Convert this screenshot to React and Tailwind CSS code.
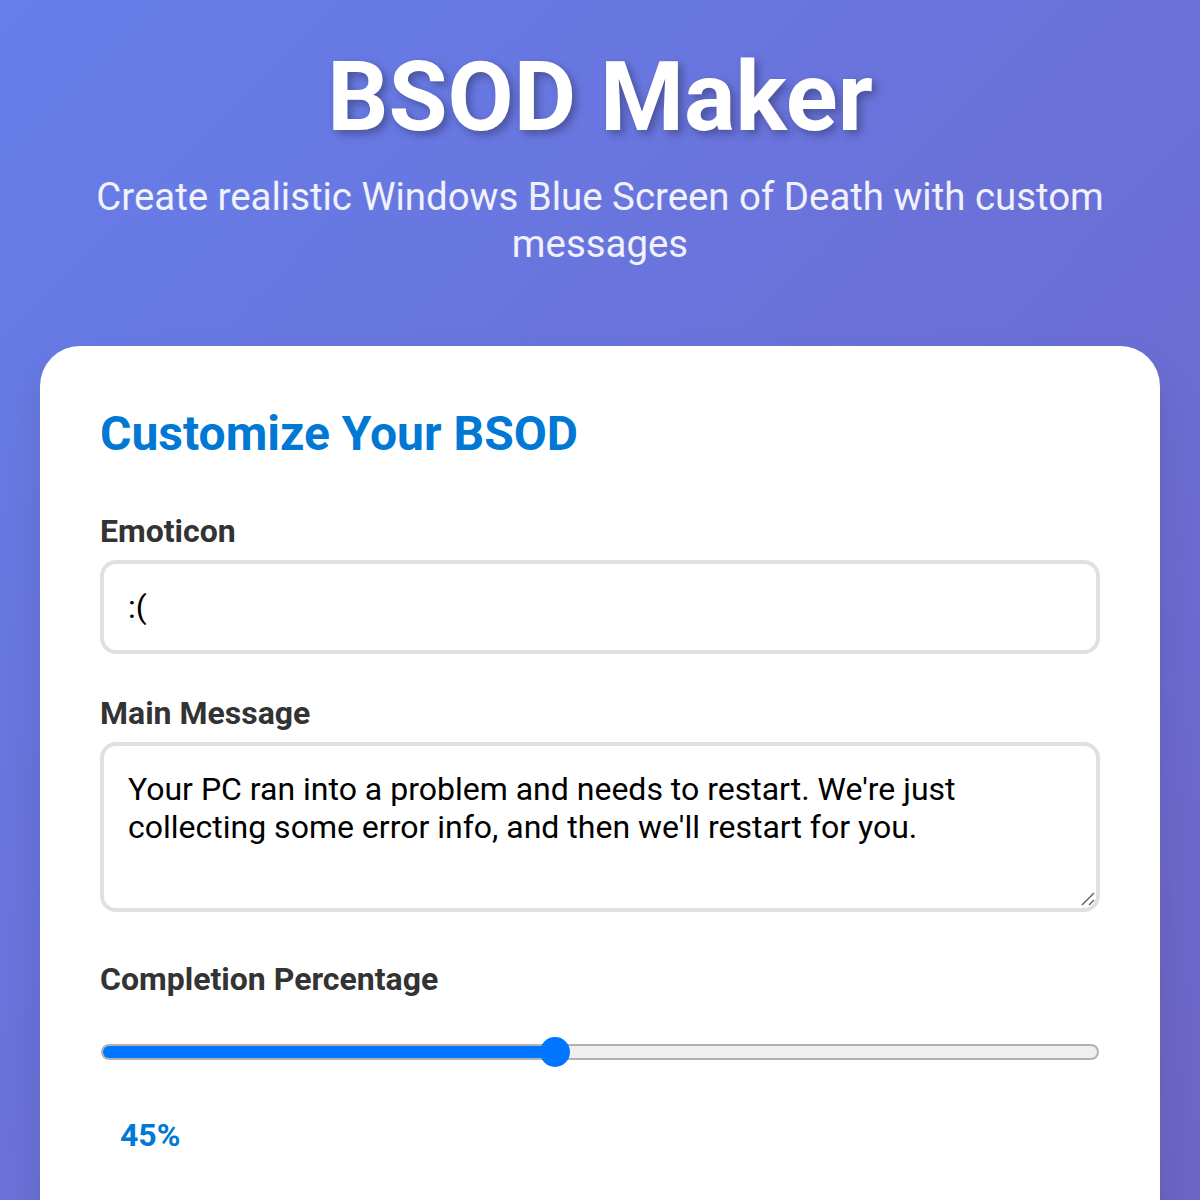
import React, { useState } from 'react'

function Field({ label, children, className = '' }) {
  return (
    <div className={className}>
      <label className="block text-[32px] leading-[38px] font-bold text-[#333] mb-[10px]">
        {label}
      </label>
      {children}
    </div>
  )
}

function RangeSlider({ value }) {
  // thumb center moves between r and width - r, like the native range input
  const pct = value / 100
  return (
    <div className="relative h-[30px] mx-[1px] flex items-center">
      <div className="relative w-full h-[16px] rounded-full bg-[#efefef] border-2 border-[#b2b2b2] overflow-hidden">
        <div
          className="absolute -left-[2px] -top-[2px] -bottom-[2px] bg-[#0075ff] rounded-l-full border-2 border-[#1d6fd6]"
          style={{ width: `calc(18px + ${pct} * (100% - 30px) + 2px)` }}
        />
      </div>
      <div
        className="absolute top-0 w-[30px] h-[30px] rounded-full bg-[#0075ff]"
        style={{ left: `calc(3px + ${pct} * (100% - 30px))` }}
      />
    </div>
  )
}

export default function App() {
  const [emoticon, setEmoticon] = useState(':(')
  const [message, setMessage] = useState(
    "Your PC ran into a problem and needs to restart. We're just collecting some error info, and then we'll restart for you."
  )
  const [percent] = useState(45)
  const [stopCode, setStopCode] = useState('CRITICAL_PROCESS_DIED')

  return (
    <div className="min-h-[3600px] bg-[linear-gradient(135deg,#667eea_0%,#764ba2_100%)] px-10 pt-[41px] pb-10 font-['Roboto',sans-serif]">
      {/* Header */}
      <header className="text-center text-white mb-[79px]">
        <h1 className="text-[96px] leading-[112px] font-bold mb-5 [text-shadow:4px_4px_8px_rgba(0,0,0,0.3)]">
          BSOD Maker
        </h1>
        <p className="text-[38.4px] leading-[47px] text-white/90">
          Create realistic Windows Blue Screen of Death with custom messages
        </p>
      </header>

      {/* Editor card */}
      <main className="bg-white rounded-[40px] p-[60px] shadow-[0_20px_40px_rgba(0,0,0,0.1)]">
        <h2 className="text-[48px] leading-[56px] font-bold text-[#0078d4] mb-[50px]">
          Customize Your BSOD
        </h2>

        <Field label="Emoticon" className="mb-[40px]">
          <input
            type="text"
            value={emoticon}
            onChange={(e) => setEmoticon(e.target.value)}
            className="block w-full h-[94px] px-6 border-4 border-[#e0e0e0] rounded-2xl text-[32px] text-black outline-none"
          />
        </Field>

        <Field label="Main Message" className="mb-[48px]">
          <div className="relative">
            <textarea
              rows={3}
              value={message}
              onChange={(e) => setMessage(e.target.value)}
              className="block w-full h-[170px] px-6 pt-6 pb-6 border-4 border-[#e0e0e0] rounded-2xl text-[32px] leading-[38px] text-black outline-none resize-none"
            />
            <svg className="absolute right-[4px] bottom-[5px] w-[16px] h-[16px]" viewBox="0 0 16 16">
              <line x1="14" y1="2" x2="2" y2="14" stroke="#6b6b6b" strokeWidth="1.6" />
              <line x1="14" y1="9" x2="9" y2="14" stroke="#6b6b6b" strokeWidth="1.6" />
            </svg>
          </div>
        </Field>

        <div className="mb-[40px]">
          <label className="block text-[32px] leading-[38px] font-bold text-[#333] mb-[39px]">
            Completion Percentage
          </label>
          <RangeSlider value={percent} />
          <div className="mt-[49px] ml-5 text-[32px] leading-[38px] font-bold text-[#0078d4]">
            {percent}%
          </div>
        </div>

        <Field label="Stop Code" className="mb-[42px]">
          <input
            type="text"
            value={stopCode}
            onChange={(e) => setStopCode(e.target.value)}
            className="block w-full h-[94px] px-6 border-4 border-[#e0e0e0] rounded-2xl text-[32px] text-black outline-none"
          />
        </Field>

        <button
          type="button"
          className="w-full h-[96px] rounded-2xl bg-[#0078d4] text-white text-[34px] font-bold"
        >
          Generate BSOD
        </button>
      </main>

      {/* Preview */}
      <section className="mt-[60px] bg-white rounded-[40px] p-[60px] shadow-[0_20px_40px_rgba(0,0,0,0.1)]">
        <h2 className="text-[48px] leading-[56px] font-bold text-[#0078d4] mb-[40px]">Preview</h2>
        <div className="bg-[#0078d7] text-white rounded-2xl px-[80px] py-[90px]">
          <div className="text-[160px] leading-none mb-[40px]">{emoticon}</div>
          <p className="text-[36px] leading-[48px] mb-[50px]">{message}</p>
          <p className="text-[36px] mb-[50px]">{percent}% complete</p>
          <p className="text-[24px] leading-[34px] text-white/90">
            For more information about this issue and possible fixes, visit https://www.windows.com/stopcode
          </p>
          <p className="text-[24px] leading-[34px] mt-[20px] text-white/90">Stop code: {stopCode}</p>
        </div>
      </section>
    </div>
  )
}
